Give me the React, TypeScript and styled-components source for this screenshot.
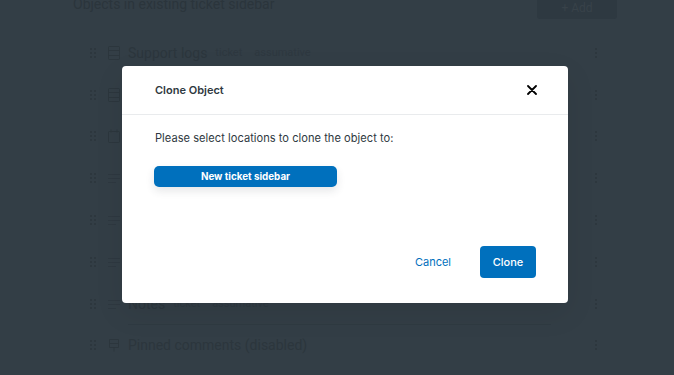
import React from "react";
import styled, { createGlobalStyle } from "styled-components";

const Global = createGlobalStyle`
  html, body { margin: 0; padding: 0; }
  body {
    width: 674px;
    height: 375px;
    overflow: hidden;
    background: #333e46;
    font-family: Roboto, "Noto Sans", sans-serif;
  }
`;

const Page = styled.div`
  position: relative;
  width: 674px;
  height: 375px;
  overflow: hidden;
  background: #333e46;
`;

const Content = styled.div`
  display: flex;
  flex-direction: column;
  padding: 0 57px 0 73px;
  margin-top: -6px;
`;

const TopBar = styled.div`
  display: flex;
  justify-content: space-between;
  align-items: flex-start;
  height: 38px;
`;

const PageTitle = styled.div`
  font-size: 14px;
  line-height: 20px;
  color: #2b353c;
`;

const AddButton = styled.div`
  width: 80px;
  height: 25px;
  border-radius: 3px;
  background: #2e3941;
  color: #384249;
  font-size: 12px;
  display: flex;
  align-items: center;
  justify-content: center;
  padding-top: 3px;
  box-sizing: border-box;
`;

const List = styled.div`
  display: flex;
  flex-direction: column;
  padding-left: 17px;
`;

const Row = styled.div`
  display: flex;
  align-items: center;
  height: 41.8px;
  position: relative;
`;

const Handle = styled.div`
  display: grid;
  grid-template-columns: 2px 2px;
  grid-gap: 2px;
  width: 6px;
  margin-right: 12px;
  span {
    width: 2px;
    height: 2px;
    border-radius: 1px;
    background: #2c363d;
  }
`;

const RowIcon = styled.svg`
  width: 12px;
  height: 14px;
  margin-right: 8px;
  flex: none;
`;

const RowName = styled.span`
  font-size: 14px;
  color: #2c363d;
  margin-right: 8px;
`;

const RowTag = styled.span`
  font-size: 11px;
  color: #2e3840;
  margin-right: 12px;
`;

const Kebab = styled.div`
  margin-left: auto;
  margin-right: 20px;
  display: flex;
  flex-direction: column;
  gap: 2px;
  span {
    width: 2px;
    height: 2px;
    background: #2c363d;
    border-radius: 1px;
  }
`;

const SubLine = styled.div`
  position: absolute;
  left: 38px;
  right: 66px;
  bottom: 0px;
  border-bottom: 1px solid #2f3a42;
`;

const Modal = styled.div`
  position: absolute;
  left: 122px;
  top: 66px;
  width: 446px;
  background: #ffffff;
  border-radius: 4px;
  box-shadow: 0 10px 30px rgba(0, 0, 0, 0.08);
  font-family: Inter, "Open Sans", sans-serif;
  color: #2f3941;
  display: flex;
  flex-direction: column;
`;

const Header = styled.div`
  display: flex;
  align-items: center;
  justify-content: space-between;
  height: 48px;
  padding: 0 31px 0 33px;
  border-bottom: 1px solid #e9ebed;
`;

const Title = styled.h2`
  margin: 0;
  font-size: 11px;
  font-weight: 600;
  color: #2f3941;
`;

const Close = styled.button`
  border: 0;
  background: none;
  padding: 0;
  width: 10px;
  height: 10px;
  display: flex;
  cursor: pointer;
`;

const Body = styled.div`
  display: flex;
  flex-direction: column;
  align-items: flex-start;
  padding: 15px 33px 0 32px;
  gap: 20px;
`;

const Prompt = styled.p`
  margin: 0 0 0 1px;
  font-size: 11.1px;
  letter-spacing: 0.03px;
  line-height: 16px;
  color: #2f3941;
`;

const LocationButton = styled.button`
  width: 183px;
  height: 21px;
  border: 0;
  border-radius: 5px;
  background: #0070bd;
  color: #ffffff;
  font-family: Inter, "Open Sans", sans-serif;
  font-weight: 700;
  font-size: 9.8px;
  box-shadow: 0 4px 9px rgba(47, 57, 65, 0.12);
  cursor: pointer;
`;

const Footer = styled.div`
  display: flex;
  justify-content: flex-end;
  align-items: center;
  gap: 16px;
  margin-top: 59px;
  padding: 0 32px 25px;
`;

const TextButton = styled.button`
  border: 0;
  background: none;
  color: #0070bd;
  font-family: Inter, "Open Sans", sans-serif;
  font-size: 11px;
  height: 32px;
  padding: 0 13px;
  cursor: pointer;
`;

const PrimaryButton = styled.button`
  border: 0;
  background: #0070bd;
  color: #ffffff;
  border-radius: 4px;
  width: 56px;
  height: 32px;
  font-family: Inter, "Open Sans", sans-serif;
  font-size: 11px;
  font-weight: 500;
  cursor: pointer;
`;

const ListIcon = () => (
  <RowIcon viewBox="0 0 12 14" fill="none" stroke="#2c363d" strokeWidth="1">
    <rect x="0.5" y="0.5" width="11" height="13" rx="1" />
    <path d="M0.5 4.5h11M0.5 9.5h11" />
  </RowIcon>
);

const CalIcon = () => (
  <RowIcon viewBox="0 0 12 14" fill="none" stroke="#2c363d" strokeWidth="1">
    <rect x="0.5" y="2.5" width="11" height="11" rx="1" />
    <path d="M3 0.5v3M9 0.5v3" />
  </RowIcon>
);

const LinesIcon = () => (
  <RowIcon viewBox="0 0 12 14" fill="none" stroke="#2e3840" strokeWidth="1">
    <path d="M0 3.5h12M0 7.5h12M0 11.5h8" />
  </RowIcon>
);

const PinIcon = () => (
  <RowIcon viewBox="0 0 12 14" fill="none" stroke="#2c363d" strokeWidth="1">
    <path d="M1.5 1.5h9v8h-9zM6 9.5v4M1.5 5.5h9" />
  </RowIcon>
);

type RowData = {
  icon: React.ReactNode;
  name: string;
  tag?: string;
  extra?: string;
  sub?: boolean;
};

const rows: RowData[] = [
  { icon: <ListIcon />, name: "Support logs", tag: "ticket", extra: "assumative" },
  { icon: <ListIcon />, name: "Customer", tag: "user" },
  { icon: <CalIcon />, name: "Events", tag: "ticket" },
  { icon: <LinesIcon />, name: "Orders", tag: "user" },
  { icon: <LinesIcon />, name: "Links", tag: "ticket" },
  { icon: <LinesIcon />, name: "Macros", tag: "ticket" },
  { icon: <LinesIcon />, name: "Notes", tag: "ticket", extra: "assumative", sub: true },
  { icon: <PinIcon />, name: "Pinned comments (disabled)" },
];

const Dots = () => (
  <Handle>
    {Array.from({ length: 6 }).map((_, i) => (
      <span key={i} />
    ))}
  </Handle>
);

const KebabMenu = () => (
  <Kebab>
    <span />
    <span />
    <span />
  </Kebab>
);

export default function App() {
  return (
    <Page>
      <Global />
      <Content>
        <TopBar>
          <PageTitle>Objects in existing ticket sidebar</PageTitle>
          <AddButton>+ Add</AddButton>
        </TopBar>
        <List>
          {rows.map((r) => (
            <Row key={r.name}>
              <Dots />
              {r.icon}
              <RowName>{r.name}</RowName>
              {r.tag && <RowTag>{r.tag}</RowTag>}
              {r.extra && <RowTag>{r.extra}</RowTag>}
              <KebabMenu />
              {r.sub && <SubLine />}
            </Row>
          ))}
        </List>
      </Content>

      <Modal role="dialog" aria-label="Clone Object">
        <Header>
          <Title>Clone Object</Title>
          <Close aria-label="Close">
            <svg width="10" height="10" viewBox="0 0 10 10">
              <path d="M1 1L9 9M9 1L1 9" stroke="#000" strokeWidth="1.8" strokeLinecap="round" />
            </svg>
          </Close>
        </Header>
        <Body>
          <Prompt>Please select locations to clone the object to:</Prompt>
          <LocationButton>New ticket sidebar</LocationButton>
        </Body>
        <Footer>
          <TextButton>Cancel</TextButton>
          <PrimaryButton>Clone</PrimaryButton>
        </Footer>
      </Modal>
    </Page>
  );
}
